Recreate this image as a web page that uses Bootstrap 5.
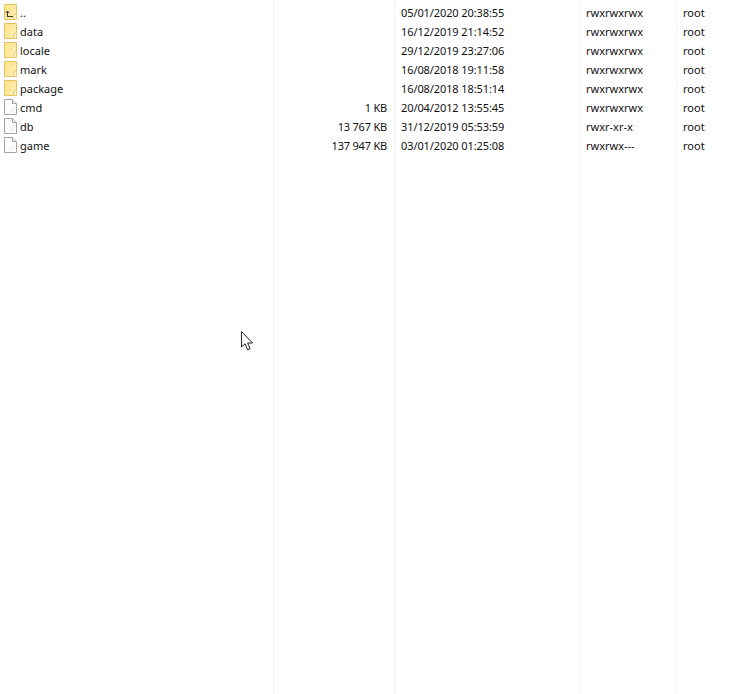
<!DOCTYPE html>
<html lang="en">
<head>
<meta charset="utf-8">
<title>Files</title>
<link href="https://cdn.jsdelivr.net/npm/bootstrap@5.3.0/dist/css/bootstrap.min.css" rel="stylesheet">
<style>
html,body{height:100%;margin:0;background:#fff;overflow:hidden}
.pane{position:relative;height:694px;width:732px}
.ftable{table-layout:fixed;width:732px;height:694px;border-collapse:separate;border-spacing:0;font:11px/18px "Noto Sans",sans-serif;color:#111}
.ftable td{padding:0;height:19px;white-space:nowrap;border-right:1px solid #f0f4fa;vertical-align:top;overflow:hidden}
.ftable td:last-child{border-right:0}
.ftable tr.topgap td{height:4px;line-height:0;font-size:0}
.ftable tr.filler td{height:auto}
.cname{padding-left:4px!important}
.cname svg{display:inline-block;vertical-align:top;margin-right:3px}
.csize{text-align:right;padding-right:7px!important;letter-spacing:-.2px}
.cdate{padding-left:6px!important;letter-spacing:-.1px}
.cperm{padding-left:6px!important}
.cown{padding-left:6px!important}
.ptr{position:absolute;left:241px;top:331px}
</style>
</head>
<body>
<svg width="0" height="0" class="d-block">
<defs>
<linearGradient id="fg" x1="0" y1="0" x2="1" y2="1"><stop offset="0" stop-color="#ffe38a"/><stop offset="1" stop-color="#ffefb8"/></linearGradient>
<symbol id="fold" viewBox="0 0 13 16">
<path d="M.5.5h12v15H.5z" fill="url(#fg)" stroke="#e6c25f"/>
<path d="M9.5 15.500v-4l3-2v6z" fill="#fff3c4" stroke="#eccb6c"/>
</symbol>
<symbol id="doc" viewBox="0 0 13 16">
<path d="M.5.5h8l4 4v11H.5z" fill="#fff" stroke="#a3a3a3"/>
<path d="M8.500.5v4h4" fill="#f2f2f2" stroke="#a3a3a3"/>
<path d="M2 14L11 6v8z" fill="#f6f6f6"/>
</symbol>
</defs>
</svg>
<div class="pane">
<table class="ftable">
<colgroup><col style="width:274px"><col style="width:121px"><col style="width:185px"><col style="width:97px"><col></colgroup>
<tbody>
<tr class="topgap"><td></td><td></td><td></td><td></td><td></td></tr>
<tr><td class="cname"><svg width="13" height="16"><use href="#fold"/><path d="M3 12.500h6M3.500 7v5.500M1.500 9l2-2 2 2" fill="none" stroke="#3c3c2c"/></svg>..</td><td class="csize"></td><td class="cdate">05/01/2020 20:38:55</td><td class="cperm">rwxrwxrwx</td><td class="cown">root</td></tr>
<tr><td class="cname"><svg width="13" height="16"><use href="#fold"/></svg>data</td><td class="csize"></td><td class="cdate">16/12/2019 21:14:52</td><td class="cperm">rwxrwxrwx</td><td class="cown">root</td></tr>
<tr><td class="cname"><svg width="13" height="16"><use href="#fold"/></svg>locale</td><td class="csize"></td><td class="cdate">29/12/2019 23:27:06</td><td class="cperm">rwxrwxrwx</td><td class="cown">root</td></tr>
<tr><td class="cname"><svg width="13" height="16"><use href="#fold"/></svg>mark</td><td class="csize"></td><td class="cdate">16/08/2018 19:11:58</td><td class="cperm">rwxrwxrwx</td><td class="cown">root</td></tr>
<tr><td class="cname"><svg width="13" height="16"><use href="#fold"/></svg>package</td><td class="csize"></td><td class="cdate">16/08/2018 18:51:14</td><td class="cperm">rwxrwxrwx</td><td class="cown">root</td></tr>
<tr><td class="cname"><svg width="13" height="16"><use href="#doc"/></svg>cmd</td><td class="csize">1 KB</td><td class="cdate">20/04/2012 13:55:45</td><td class="cperm">rwxrwxrwx</td><td class="cown">root</td></tr>
<tr><td class="cname"><svg width="13" height="16"><use href="#doc"/></svg>db</td><td class="csize">13 767 KB</td><td class="cdate">31/12/2019 05:53:59</td><td class="cperm">rwxr-xr-x</td><td class="cown">root</td></tr>
<tr><td class="cname"><svg width="13" height="16"><use href="#doc"/></svg>game</td><td class="csize">137 947 KB</td><td class="cdate">03/01/2020 01:25:08</td><td class="cperm">rwxrwx---</td><td class="cown">root</td></tr>
<tr class="filler"><td></td><td></td><td></td><td></td><td></td></tr>
</tbody>
</table>
<svg class="ptr" width="13" height="20" viewBox="0 0 13 20"><path d="M.5.500v15.500l3.500-3.200 2.600 6 2.500-1.100-2.500-5.700h5z" fill="#fff" stroke="#222"/></svg>
</div>
<script src="https://cdn.jsdelivr.net/npm/bootstrap@5.3.0/dist/js/bootstrap.bundle.min.js"></script>
</body>
</html>
